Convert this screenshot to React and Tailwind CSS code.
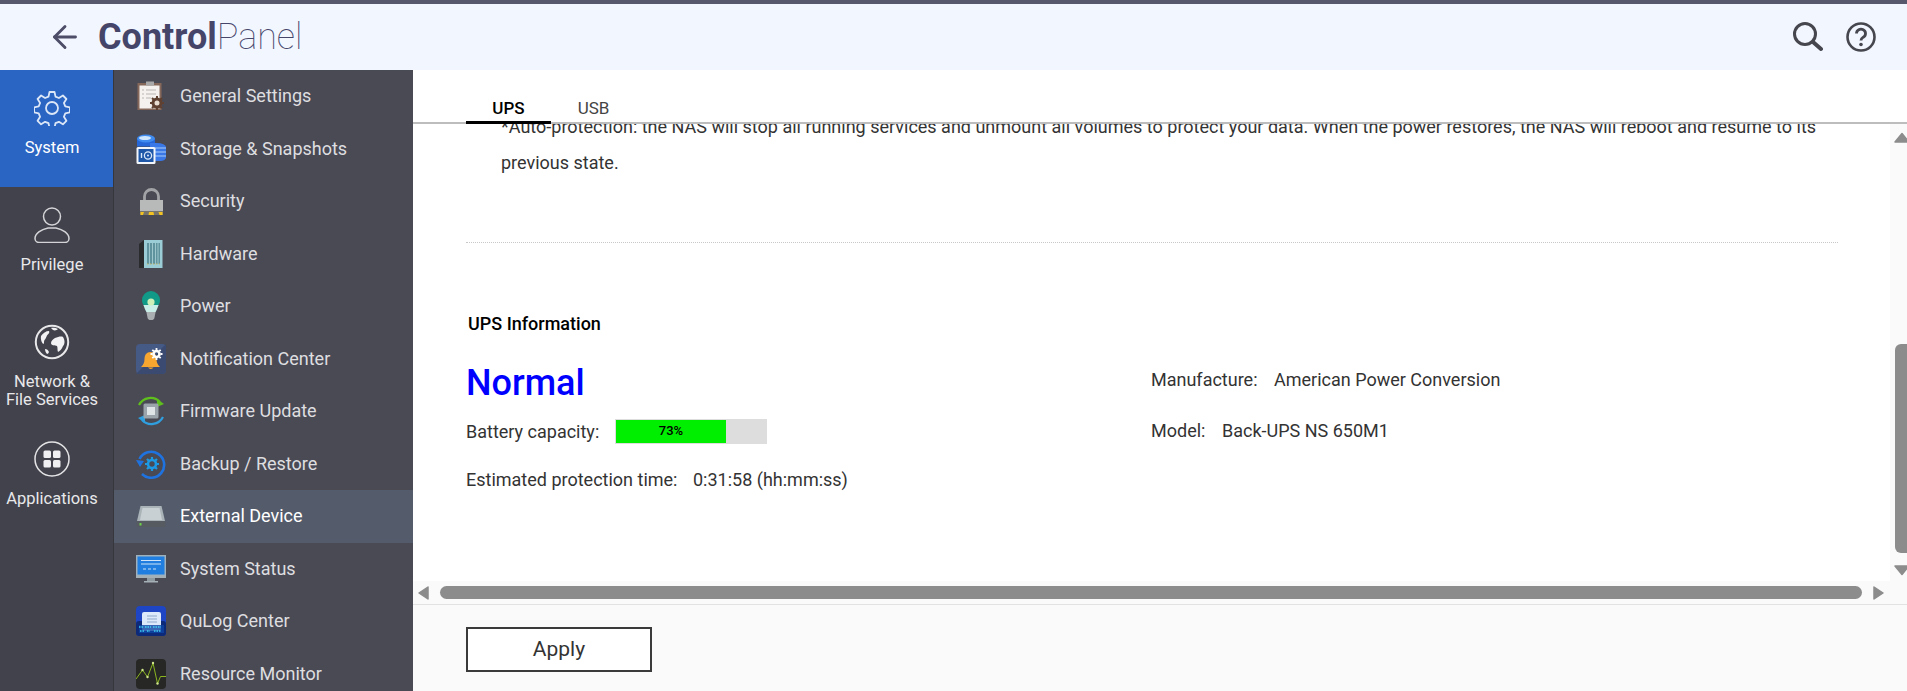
import { ArrowLeft } from "lucide-react";

const GeneralIcon = () => (
  <svg viewBox="0 0 30 30" className="w-[30px] h-[30px]">
    <rect x="1.5" y="2" width="24" height="27" fill="#86685a" />
    <rect x="3.5" y="4.5" width="20" height="23" fill="#f4f1ee" />
    <rect x="10" y="0.5" width="8" height="4" fill="#a9a9a9" />
    <path d="M6 9h2M6 13h2M6 17h2M10 9h10M10 13h10M10 17h5" stroke="#b9b6b2" strokeWidth="1.2" />
    <circle cx="21" cy="22" r="4" fill="#e9ddd2" stroke="#5f4031" strokeWidth="3" />
    <path d="M21 15v2.500M21 26.500V29M14 22h2.500M25.500 22H28M16 17l2 2M24 25l2 2M26 17l-2 2M18 25l-2 2" stroke="#5f4031" strokeWidth="2" />
  </svg>
);

const StorageIcon = () => (
  <svg viewBox="0 0 30 30" className="w-[30px] h-[30px]">
    <path d="M1 4.500v8h18v-8z" fill="#2566d8" />
    <ellipse cx="10" cy="4.500" rx="9" ry="4" fill="#3f8bf0" />
    <ellipse cx="9" cy="4" rx="6" ry="2" fill="#cfe6ff" />
    <path d="M14 9h7a9 4 0 0 1 9 4v11a6 4 0 0 1-6 3H14z" fill="#3a78e8" />
    <path d="M19 14h11M19 18h11M19 22h11" stroke="#a9cdfa" strokeWidth="1.200" />
    <rect x="0.500" y="13" width="19" height="17" rx="1.500" fill="#f2f6fb" />
    <rect x="2.500" y="15" width="15" height="13" fill="#1f57a8" />
    <circle cx="12" cy="21.500" r="3.600" fill="none" stroke="#dbe8f8" strokeWidth="1.300" />
    <circle cx="12" cy="21.500" r="1" fill="#dbe8f8" />
    <path d="M5.500 19v5" stroke="#dbe8f8" strokeWidth="1.400" />
  </svg>
);

const SecurityIcon = () => (
  <svg viewBox="0 0 30 30" className="w-[30px] h-[30px]">
    <path d="M8.500 15V10.500a7 7 0 0 1 14 0V15" fill="none" stroke="#a2a3a6" strokeWidth="2.800" />
    <rect x="4" y="14" width="23" height="12" fill="#b8b9b9" />
    <rect x="4" y="25" width="23" height="4" fill="#77746b" />
    <path d="M4.500 26h3.500l-1 3H4.500zM13 26h4.500l.5 3h-5.500zM22.500 26H26.500v3h-3z" fill="#f3c321" />
  </svg>
);

const HardwareIcon = () => (
  <svg viewBox="0 0 30 30" className="w-[30px] h-[30px]">
    <path d="M3 5l5-4v28H3z" fill="#2a2b2c" />
    <path d="M8 1h18.500v28H8z" fill="#9bcdd6" />
    <path d="M11 4h13v21H11z" fill="#5f949e" />
    <path d="M13.500 4v21M16.500 4v21M19.500 4v21M22 4v21" stroke="#9ec6cd" strokeWidth="1" />
    <path d="M11 25h13" stroke="#c8b968" strokeWidth="1.200" strokeDasharray="1.500 1.500" />
  </svg>
);

const PowerIcon = () => (
  <svg viewBox="0 0 30 30" className="w-[30px] h-[30px]">
    <path d="M6 9a9 9 0 0 1 18 0c0 2-.6 3.500-1.400 5H7.400C6.600 12.500 6 11 6 9z" fill="#119a87" />
    <path d="M7.400 14h15.200c-.8 2.500-2 5-3 7h-9.200c-1-2-2.200-4.500-3-7z" fill="#c9eee8" />
    <circle cx="15" cy="11" r="3.600" fill="#cdf0b8" />
    <path d="M10.400 21h9.200l-1 5a3.500 3 0 0 1-7.200 0z" fill="#a9aeb0" />
  </svg>
);

const NotificationIcon = () => (
  <svg viewBox="0 0 30 30" className="w-[30px] h-[30px]">
    <rect width="30" height="30" rx="4" fill="#465a86" />
    <path d="M30 0L0 30h26a4 4 0 0 0 4-4z" fill="#3a4a70" />
    <path d="M14.500 8c-4 0-6 3-6 7 0 4-1.500 6-3.500 8h19c-2-2-3.500-4-3.500-8 0-4-2-7-6-7z" fill="#f7a630" />
    <path d="M12 23.500a3.200 3 0 0 0 5.500 0z" fill="#f7a630" />
    <circle cx="20.500" cy="10" r="3" fill="none" stroke="#fff" strokeWidth="2.600" />
    <path d="M20.500 4v2M20.500 14v2M14.500 10h2M24.500 10h2M16.300 5.800l1.400 1.400M23.300 12.800l1.400 1.400M24.700 5.800l-1.400 1.400M17.700 12.800l-1.400 1.400" stroke="#fff" strokeWidth="1.800" />
  </svg>
);

const FirmwareIcon = () => (
  <svg viewBox="0 0 30 30" className="w-[30px] h-[30px]">
    <path d="M3 9a13 13 0 0 1 21-3" fill="none" stroke="#5fbf1d" strokeWidth="2.200" />
    <path d="M21 3l7 5-7 3z" fill="#5fbf1d" />
    <path d="M27 21a13 13 0 0 1-21 3" fill="none" stroke="#2f9fe0" strokeWidth="2.200" />
    <path d="M9 27l-7-5 7-3z" fill="#2f9fe0" />
    <rect x="7.500" y="7.500" width="15" height="15" rx="1.500" fill="#9aa4aa" />
    <rect x="11" y="11" width="8" height="8" fill="#dfe4e6" />
  </svg>
);

const BackupIcon = () => (
  <svg viewBox="0 0 30 30" className="w-[30px] h-[30px]">
    <path d="M3.500 10A13 13 0 1 1 6 25" fill="none" stroke="#1f73e0" strokeWidth="2.600" />
    <path d="M0 11l8 1-4 6z" fill="#1f73e0" />
    <circle cx="16" cy="15" r="4" fill="none" stroke="#1d9ae6" strokeWidth="2.600" />
    <path d="M16 8v2.500M16 19.500V22M9 15h2.500M20.500 15H23M11 10l1.800 1.800M19.200 18.200L21 20M21 10l-1.800 1.800M12.800 18.200L11 20" stroke="#1d9ae6" strokeWidth="2.200" />
  </svg>
);

const ExternalIcon = () => (
  <svg viewBox="0 0 30 30" className="w-[30px] h-[30px]">
    <path d="M4.500 5h21L29 20H1z" fill="#a9b3b8" />
    <path d="M6.500 7h17l2.500 12H4z" fill="#c8d0d4" />
    <rect x="0.500" y="20" width="29" height="6" rx="1" fill="#555b60" />
    <rect x="3.500" y="22" width="2" height="2.500" fill="#6fd14a" />
  </svg>
);

const StatusIcon = () => (
  <svg viewBox="0 0 30 30" className="w-[30px] h-[30px]">
    <rect x="0" y="1" width="30" height="21" fill="#9fb1bd" />
    <rect x="1.500" y="2.500" width="27" height="18" fill="#1f7ee0" />
    <path d="M5 6.500h20M5 10h20" stroke="#cfe4f8" strokeWidth="1.200" />
    <path d="M7 15h3M12 15h3M17 15h3" stroke="#cfe4f8" strokeWidth="1.200" />
    <rect x="0" y="22" width="30" height="2" fill="#a5b0b6" />
    <rect x="11" y="24" width="8" height="3" fill="#8f9aa1" />
    <rect x="8" y="27" width="14" height="1.500" fill="#a5b0b6" />
  </svg>
);

const QuLogIcon = () => (
  <svg viewBox="0 0 30 30" className="w-[30px] h-[30px]">
    <rect width="30" height="30" rx="4" fill="#1d45c4" />
    <rect y="15" width="30" height="15" rx="3" fill="#0d2a78" />
    <rect x="6" y="6" width="19" height="19" rx="2" fill="#dbe9fa" />
    <path d="M11 10h10M11 13h10M11 16h10" stroke="#8fa9cc" strokeWidth="1" />
    <rect x="3" y="19" width="25" height="8" fill="#0e46a6" opacity="0.8" />
    <path d="M3 21h4M9 21h6M17 21h8M4 25h5M11 25h3M18 25h7" stroke="#3fd0f2" strokeWidth="1.400" strokeDasharray="1.500 1" />
  </svg>
);

const MonitorIcon = () => (
  <svg viewBox="0 0 30 30" className="w-[30px] h-[30px]">
    <rect width="30" height="30" rx="4" fill="#272726" />
    <path d="M0 20l6.500-9 5 7 5.500-14 4.500 20.500 3-7H30" fill="none" stroke="#8ab51f" strokeWidth="1" />
    <circle cx="6.500" cy="11" r="1.200" fill="#cfe68a" />
    <circle cx="11.500" cy="18" r="1.200" fill="#cfe68a" />
    <circle cx="17" cy="4" r="1.200" fill="#cfe68a" />
    <circle cx="21.500" cy="24.500" r="1.200" fill="#cfe68a" />
  </svg>
);

const navItems = [
  { name: "General Settings", icon: GeneralIcon },
  { name: "Storage & Snapshots", icon: StorageIcon },
  { name: "Security", icon: SecurityIcon },
  { name: "Hardware", icon: HardwareIcon },
  { name: "Power", icon: PowerIcon },
  { name: "Notification Center", icon: NotificationIcon },
  { name: "Firmware Update", icon: FirmwareIcon },
  { name: "Backup / Restore", icon: BackupIcon },
  { name: "External Device", icon: ExternalIcon, active: true },
  { name: "System Status", icon: StatusIcon },
  { name: "QuLog Center", icon: QuLogIcon },
  { name: "Resource Monitor", icon: MonitorIcon },
];

const GearRail = () => (
  <svg viewBox="0 0 36 36" fill="none" stroke="#dbe6f7" strokeWidth="1.800" className="w-9 h-9">
    <circle cx="18" cy="18" r="6" />
    <path d="M15.500 2h5l1 4.600 3.400 1.400 4-2.500 3.500 3.500-2.500 4 1.400 3.400 4.600 1v5l-4.600 1-1.400 3.400 2.500 4-3.500 3.500-4-2.500-3.400 1.400-1 4.600h-5l-1-4.600-3.400-1.400-4 2.500-3.500-3.500 2.500-4-1.400-3.400-4.600-1v-5l4.600-1 1.400-3.400-2.500-4 3.500-3.500 4 2.500 3.400-1.400z" strokeLinejoin="round" />
  </svg>
);

const PersonRail = () => (
  <svg viewBox="0 0 36 36" fill="none" stroke="#d4d4d8" strokeWidth="1.500" className="w-9 h-9">
    <circle cx="18" cy="9.500" r="8.500" />
    <path d="M5 35.500a4 4 0 0 1-4-4c0-5 6-9 13-10.500h8c7 1.500 13 5.500 13 10.500a4 4 0 0 1-4 4z" strokeLinejoin="round" />
  </svg>
);

const GlobeRail = () => (
  <svg viewBox="0 0 36 36" className="w-9 h-9">
    <circle cx="18" cy="18" r="16.200" fill="none" stroke="#e8e8ea" strokeWidth="2" />
    <path d="M7 12c2-3 5-5 8-5 1 2-1 3-2 4.500-1 2-1.500 3.500-2.500 4.500-1 2 0 3-1 4-2-1-3-5-2.500-8zM21 14c3-1 6-2 8-1 2 3 2 7 0 9-1 3-3 5-5 6-1-2 0-4-1-6-2-1-6 0-6-3 0-2 2-4 4-5zM11 25c2 0 3 1 4 3-.5 1-1 2-2 2-1-1-2-3-2-5zM17 4c2-.5 5 0 7 1-1 1-3 2-5 1z" fill="#f2f2f4" />
  </svg>
);

const AppsRail = () => (
  <svg viewBox="0 0 36 36" className="w-9 h-9">
    <circle cx="18" cy="18" r="17" fill="none" stroke="#e4e4e6" strokeWidth="1.500" />
    <rect x="9.500" y="9.500" width="7.500" height="7.500" rx="1.500" fill="#f0f0f2" />
    <rect x="19" y="9.500" width="7.500" height="7.500" rx="1.500" fill="#f0f0f2" />
    <rect x="9.500" y="19" width="7.500" height="7.500" rx="1.500" fill="#f0f0f2" />
    <rect x="19" y="19" width="7.500" height="7.500" rx="1.500" fill="#f0f0f2" />
  </svg>
);

const railItems = [
  { label: ["System"], icon: GearRail, active: true },
  { label: ["Privilege"], icon: PersonRail },
  { label: ["Network &", "File Services"], icon: GlobeRail },
  { label: ["Applications"], icon: AppsRail },
];

const App = () => {
  return (
    <div className="h-[691px] w-full overflow-hidden flex flex-col bg-white font-['Roboto',sans-serif]">
      <div className="h-1 bg-[#57576d]" />

      {/* Header */}
      <header className="h-[66px] bg-[#f2f6ff] flex items-center pl-[47px] pr-[31px]">
        <ArrowLeft size={36} strokeWidth={1.9} className="text-[#4d4d68]" />
        <div className="ml-[15px] text-[36px] leading-none text-[#45456a] flex-1">
          <span className="font-bold">Control</span>
          <span className="font-thin">Panel</span>
        </div>
        <svg viewBox="0 0 30 30" fill="none" stroke="#46464e" className="w-[30px] h-[30px]">
          <circle cx="12" cy="12" r="10.500" strokeWidth="3" />
          <path d="M20 20l8 7" strokeWidth="4" strokeLinecap="round" />
        </svg>
        <svg viewBox="0 0 30 30" fill="none" className="w-[30px] h-[30px] ml-[23px]">
          <circle cx="15" cy="15" r="13.500" stroke="#46464e" strokeWidth="2.600" />
          <path d="M10.500 11.500a4.500 4.300 0 1 1 6.800 3.700c-1.500 1-2.300 1.700-2.300 3.300" stroke="#46464e" strokeWidth="2.800" />
          <circle cx="15" cy="22.500" r="1.800" fill="#46464e" />
        </svg>
      </header>

      <div className="flex-1 flex min-h-0">
        {/* Rail */}
        <aside className="w-[114px] bg-[#42424c] border-r border-[#36363d] shrink-0 text-[#e8e8ea] text-[16.500px] leading-[18px]">
          {railItems.map(({ label, icon: Icon, active }) => (
            <div
              key={label[0]}
              className={`h-[117px] flex flex-col items-center pt-[20px] pr-[9px] ${active ? "bg-[#2b65c3] text-white" : ""}`}
            >
              <Icon />
              <div className="mt-[12.500px] text-center">
                {label.map((line) => (
                  <div key={line}>{line}</div>
                ))}
              </div>
            </div>
          ))}
        </aside>

        {/* Nav */}
        <nav className="w-[299px] bg-[#4a4a54] shrink-0 text-[18px] text-[#dedee0]">
          {navItems.map(({ name, icon: Icon, active }) => (
            <div
              key={name}
              className={`h-[52.500px] flex items-center pl-[22px] ${active ? "bg-[#545c6c] text-white" : ""}`}
            >
              <Icon />
              <span className="ml-[14px] -mt-px">{name}</span>
            </div>
          ))}
        </nav>

        {/* Main */}
        <main className="flex-1 min-w-0 flex flex-col">
          <div className="h-[54px] border-b-2 border-[#bdbdbd] flex items-end pl-[53px] text-[17px] shrink-0">
            <div className="w-[85px] h-[28px] -mb-[2px] border-b-[3px] border-black text-center font-medium text-black leading-[24px]">
              UPS
            </div>
            <div className="w-[85px] h-[28px] -mb-[2px] text-center text-[#444] leading-[24px]">USB</div>
          </div>

          <div className="flex-1 min-h-0 flex">
            <div className="flex-1 min-w-0 overflow-hidden">
              <div className="-mt-[15px] pl-[53px] pr-[52px] text-[#333]">
                <p className="pl-[35px] text-[18px] leading-[36px]">
                  *Auto-protection: the NAS will stop all running services and unmount all volumes to protect your data. When the power restores, the NAS will reboot and resume to its previous state.
                </p>
                <div className="mt-[61px] border-t border-dotted border-[#c8c8c8]" />
                <h3 className="mt-[69px] ml-[2px] text-[18px] font-medium text-black leading-[24px]">UPS Information</h3>
                <div className="mt-[26px] flex">
                  <div className="w-[685px] shrink-0">
                    <div className="text-[36px] font-medium leading-[42px] text-[#0000ff]">Normal</div>
                    <div className="mt-[14px] flex items-center h-[26px] text-[18px]">
                      <span className="w-[149px]">Battery capacity:</span>
                      <div className="w-[152px] h-[25px] bg-[#dddddd] p-px">
                        <div className="w-[110px] h-[23px] bg-[#00ee00] flex items-center justify-center text-[13px] font-medium text-black">
                          73%
                        </div>
                      </div>
                    </div>
                    <div className="mt-[23px] flex text-[18px] leading-[26px]">
                      <span className="w-[227px]">Estimated protection time:</span>
                      <span>0:31:58 (hh:mm:ss)</span>
                    </div>
                  </div>
                  <div className="text-[18px] leading-[26px] pt-[5px]">
                    <div className="flex">
                      <span className="w-[123px]">Manufacture:</span>
                      <span>American Power Conversion</span>
                    </div>
                    <div className="mt-[25px] flex">
                      <span className="w-[71px]">Model:</span>
                      <span>Back-UPS NS 650M1</span>
                    </div>
                  </div>
                </div>
              </div>
            </div>

            {/* Vertical scrollbar */}
            <div className="w-[17px] bg-[#fafafa] flex flex-col items-end overflow-hidden shrink-0">
              <svg viewBox="0 0 16 11" className="w-4 h-[11px] mt-2 -mr-[3px] fill-[#8c8c8c] stroke-[#8c8c8c] shrink-0">
                <path d="M8 1.500L15 10H1z" strokeWidth="1.500" strokeLinejoin="round" />
              </svg>
              <div className="w-[12px] h-[209px] mt-[201px] bg-[#8c8c8c] rounded-l-[6px] shrink-0" />
              <svg viewBox="0 0 16 11" className="w-4 h-[11px] mt-3 -mr-[3px] fill-[#8c8c8c] stroke-[#8c8c8c] shrink-0">
                <path d="M8 9.500L15 1H1z" strokeWidth="1.500" strokeLinejoin="round" />
              </svg>
            </div>
          </div>

          {/* Horizontal scrollbar */}
          <div className="h-[23px] bg-[#fafafa] flex items-center pl-[5px] shrink-0">
            <svg viewBox="0 0 11 14" className="w-[11px] h-[14px] fill-[#8c8c8c] stroke-[#8c8c8c]">
              <path d="M1 7l9-6v12z" strokeWidth="1.500" strokeLinejoin="round" />
            </svg>
            <div className="w-[1422px] h-[13px] ml-[11px] bg-[#8c8c8c] rounded-full" />
            <svg viewBox="0 0 11 14" className="w-[11px] h-[14px] ml-[11px] fill-[#8c8c8c] stroke-[#8c8c8c]">
              <path d="M10 7L1 1v12z" strokeWidth="1.500" strokeLinejoin="round" />
            </svg>
          </div>

          {/* Footer */}
          <div className="h-[87px] bg-[#fafafa] border-t border-[#e2e2e2] pl-[53px] pt-[22px] shrink-0">
            <button className="w-[186px] h-[45px] pt-px bg-white border-2 border-[#3a3a3a] text-[21px] text-[#333]">
              Apply
            </button>
          </div>
        </main>
      </div>
    </div>
  );
};

export default App;
